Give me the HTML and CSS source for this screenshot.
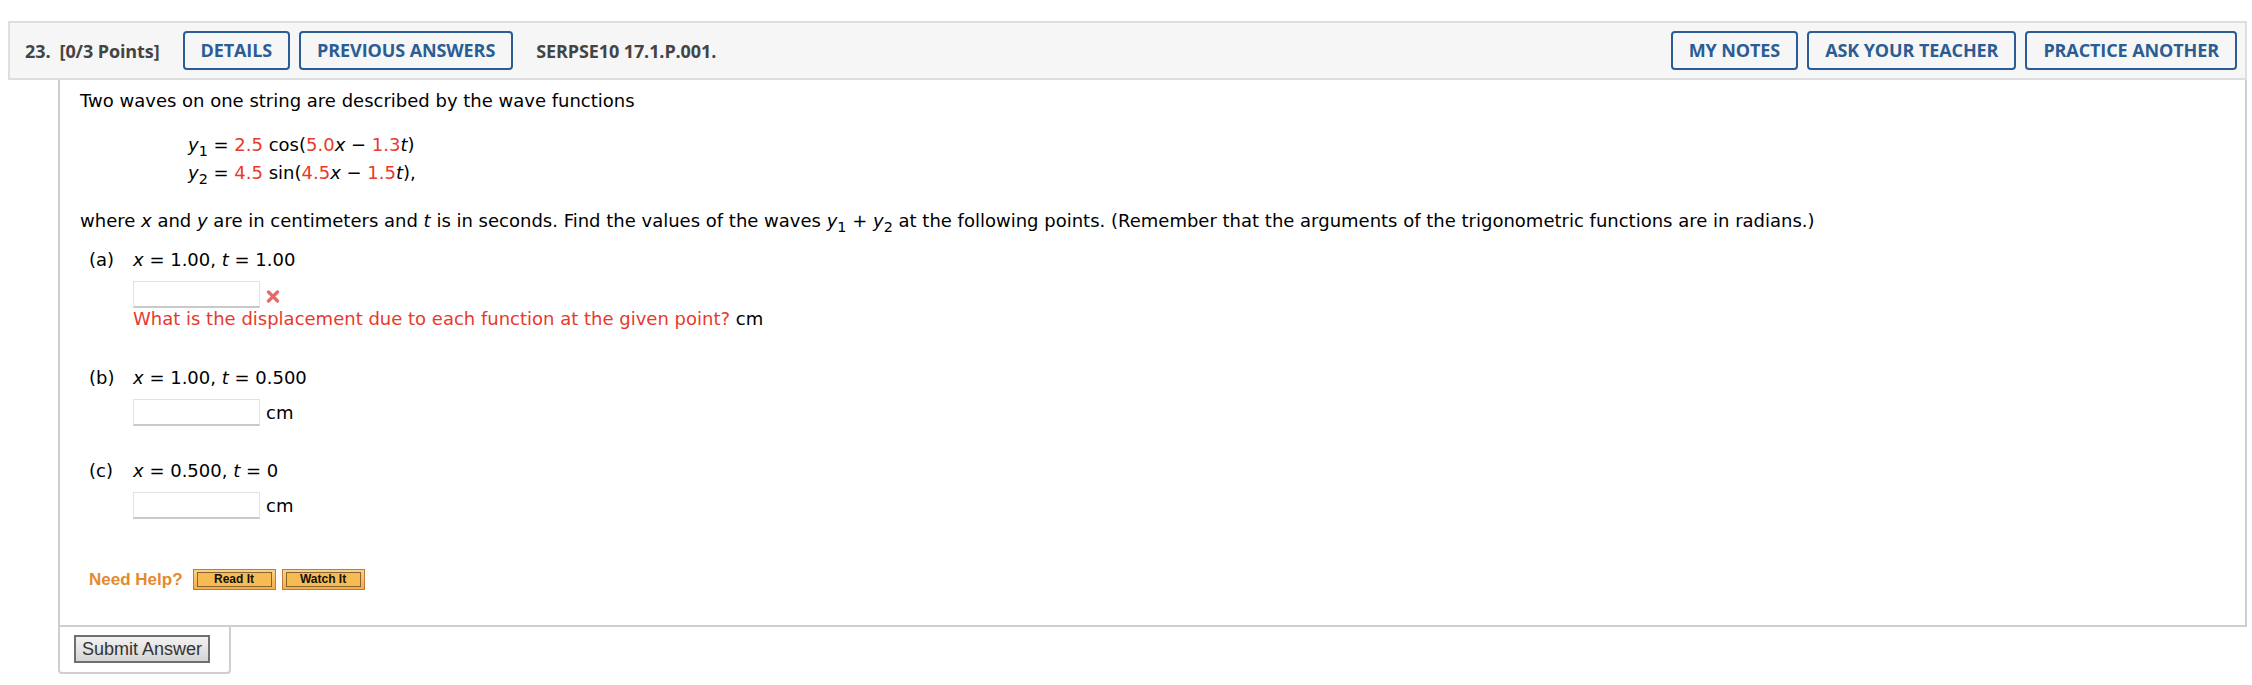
FILE: index.html
```html
<!DOCTYPE html>
<html>
<head>
<meta charset="utf-8">
<link rel="stylesheet" href="styles.css">
</head>
<body>
<div class="page">
  <div class="qhead">
    <div class="qhead-left">
      <span class="qnum">23.&nbsp; [0/3 Points]</span>
      <button class="hbtn">DETAILS</button>
      <button class="hbtn">PREVIOUS ANSWERS</button>
      <span class="qcode">SERPSE10 17.1.P.001.</span>
    </div>
    <div class="qhead-right">
      <button class="hbtn">MY NOTES</button>
      <button class="hbtn">ASK YOUR TEACHER</button>
      <button class="hbtn">PRACTICE ANOTHER</button>
    </div>
  </div>
  <div class="qbody">
    <p class="intro">Two waves on one string are described by the wave functions</p>
    <div class="eqs">
      <div class="eq"><i>y</i><sub>1</sub> = <span class="r">2.5</span> cos(<span class="r">5.0</span><i>x</i> − <span class="r">1.3</span><i>t</i>)</div>
      <div class="eq"><i>y</i><sub>2</sub> = <span class="r">4.5</span> sin(<span class="r">4.5</span><i>x</i> − <span class="r">1.5</span><i>t</i>),</div>
    </div>
    <p class="where">where <i>x</i> and <i>y</i> are in centimeters and <i>t</i> is in seconds. Find the values of the waves <i>y</i><sub>1</sub> + <i>y</i><sub>2</sub> at the following points. (Remember that the arguments of the trigonometric functions are in radians.)</p>

    <div class="part part-a">
      <div class="plabel">(a)</div>
      <div class="pbody">
        <div class="pq"><i>x</i> = 1.00, <i>t</i> = 1.00</div>
        <div class="ans">
          <input class="field" type="text">
          <svg class="xmark" width="14" height="13" viewBox="0 0 14 13"><path d="M2.5 2 L11.5 11 M11.5 2 L2.5 11" stroke="#e46a6a" stroke-width="3.2" stroke-linecap="round"/></svg>
        </div>
        <div class="fb"><span class="r">What is the displacement due to each function at the given point?</span> cm</div>
      </div>
    </div>

    <div class="part part-b">
      <div class="plabel">(b)</div>
      <div class="pbody">
        <div class="pq"><i>x</i> = 1.00, <i>t</i> = 0.500</div>
        <div class="ans">
          <input class="field" type="text">
          <span class="unit">cm</span>
        </div>
      </div>
    </div>

    <div class="part part-c">
      <div class="plabel">(c)</div>
      <div class="pbody">
        <div class="pq"><i>x</i> = 0.500, <i>t</i> = 0</div>
        <div class="ans">
          <input class="field" type="text">
          <span class="unit">cm</span>
        </div>
      </div>
    </div>

    <div class="help">
      <span class="help-label">Need Help?</span>
      <button class="hb"><span>Read It</span></button>
      <button class="hb"><span>Watch It</span></button>
    </div>
  </div>
  <div class="submit-wrap">
    <button class="submit">Submit Answer</button>
  </div>
</div>
</body>
</html>
```

FILE: styles.css
```css
* { box-sizing: border-box; }
html, body { margin: 0; padding: 0; background: #fff; }

.page { padding: 21px 5px 0 8px; }

.qhead {
  display: flex;
  justify-content: space-between;
  align-items: center;
  background: #f6f6f6;
  border: 2px solid #dedede;
  padding: 8px 8px 8px 15px;
  font-family: "Open Sans", sans-serif;
  font-weight: 700;
  font-size: 18px;
  letter-spacing: -0.1px;
  color: #444;
}
.qhead-left, .qhead-right { display: flex; align-items: center; gap: 9px; }
.qnum { margin-right: 14px; }
.qcode { margin-left: 14px; }
.hbtn {
  font-family: "Open Sans", sans-serif;
  font-weight: 700;
  font-size: 18px;
  letter-spacing: -0.1px;
  color: #2b5d94;
  background: transparent;
  border: 2px solid #2b5d94;
  border-radius: 4px;
  height: 39px;
  padding: 0 16px;
  line-height: 35px;
}

.qbody {
  margin-left: 50px;
  border: 2px solid #cfcfcf;
  border-top: 0;
  padding: 10px 20px 35px 20px;
  font-family: "DejaVu Sans", Verdana, sans-serif;
  font-size: 18px;
  line-height: 22px;
  color: #000;
}
.r { color: #e8392d; }
i { font-style: italic; }
sub { font-size: 0.8em; vertical-align: -5px; line-height: 0; }

.intro { margin: 0 0 19px; }
.eqs { margin-left: 108px; }
.eq { line-height: 28px; }
.where { margin: 23px 0 0; }

.part { display: flex; margin-left: 9px; }
.part-a { margin-top: 17px; }
.part-b { margin-top: 37px; }
.part-c { margin-top: 34px; }
.plabel { width: 44px; }
.ans { display: flex; align-items: center; gap: 6px; margin-top: 10px; }
.field {
  width: 127px;
  height: 27px;
  border: 1px solid #e2e2e2;
  border-bottom: 2px solid #c9c9c9;
  background: #fff;
  margin: 0;
  padding: 0;
}
.xmark { margin-top: 3px; }
.unit { line-height: 22px; }

.help { display: flex; align-items: center; margin: 50px 0 0 9px; height: 21px; }
.help-label {
  font-family: "Liberation Sans", Arial, sans-serif;
  font-weight: bold;
  font-size: 17px;
  color: #e5892e;
  margin-right: 10px;
}
.hb {
  width: 83px;
  height: 21px;
  margin: 0 6px 0 0;
  padding: 2px 3px;
  border: 1px solid #c27b33;
  background: linear-gradient(#fbd08a, #f2ad47);
  font-family: "Liberation Sans", Arial, sans-serif;
  font-weight: bold;
  font-size: 12px;
  color: #111;
}
.hb span {
  display: block;
  height: 15px;
  line-height: 13px;
  border: 1px solid #8a6430;
  background: #f6bb52;
}

.submit-wrap {
  margin-left: 50px;
  width: 173px;
  border: 2px solid #cfcfcf;
  border-top: 0;
  border-radius: 0 0 4px 4px;
  padding: 8px 0 9px 14px;
}
.submit {
  width: 136px;
  height: 28px;
  padding: 0;
  border: 2px solid #6f6f6f;
  background: linear-gradient(#f2f2f2, #d5d5d5);
  font-family: "Liberation Sans", Arial, sans-serif;
  font-size: 18px;
  line-height: 24px;
  color: #333;
}
```
